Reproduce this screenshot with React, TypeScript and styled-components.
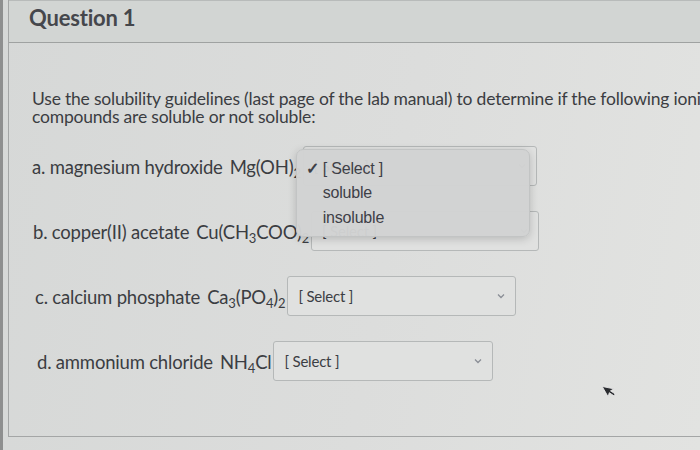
import * as React from 'react'
import styled, { createGlobalStyle } from 'styled-components'

const Global = createGlobalStyle`
  html, body {
    margin: 0;
    padding: 0;
    background: #d8dad9;
  }
  body {
    font-family: Lato, "Open Sans", sans-serif;
    color: #3b3d42;
  }
`

const Screen = styled.div`
  width: 700px;
  height: 450px;
  overflow: hidden;
  border-left: 3px solid #8e8f8f;
  box-sizing: border-box;
  background: linear-gradient(100deg, #d6d8d7 0%, #dcdddc 55%, #e2e3e1 100%);
`

const Panel = styled.div`
  margin-left: 5px;
  height: 437px;
  border-left: 1px solid #a4a6a6;
  border-bottom: 1px solid #a4a6a6;
  box-sizing: border-box;
  display: flex;
  flex-direction: column;
`

const Header = styled.header`
  height: 43px;
  background: #d2d5d3;
  border-bottom: 1px solid #9fa2a1;
  border-top: 1px solid #b8bbba;
  box-sizing: border-box;
  padding: 3px 0 0 20px;
`

const Title = styled.h1`
  margin: 0;
  font-size: 22px;
  font-weight: 700;
  color: #45474c;
  letter-spacing: -0.2px;
`

const Body = styled.div`
  padding: 47px 0 0 23px;
  position: relative;
  flex: 1;
`

const Intro = styled.p`
  margin: 0;
  font-size: 17.5px;
  line-height: 18px;
  white-space: nowrap;
  letter-spacing: -0.2px;
`

const Rows = styled.div`
  display: flex;
  flex-direction: column;
  gap: 25px;
  margin-top: 21px;
`

const Row = styled.div<{ $indent: number }>`
  display: flex;
  align-items: center;
  gap: 2px;
  padding-left: ${p => p.$indent}px;
  font-size: 18.5px;
  height: 40px;
  letter-spacing: -0.2px;
`

const Label = styled.span`
  white-space: nowrap;
  margin-right: 5px;
`

const Formula = styled.span`
  white-space: nowrap;
`

const Sub = styled.sub`
  font-size: 13px;
  vertical-align: -4px;
  line-height: 0;
`

const SelectBox = styled.div<{ $w: number }>`
  position: relative;
  width: ${p => p.$w}px;
  height: 40px;
  box-sizing: border-box;
  border: 1px solid #b5b8b8;
  border-radius: 3px;
  background: #e0e1e0;
  display: flex;
  align-items: center;
  justify-content: space-between;
  padding: 0 9px 0 10px;
  font-size: 15px;
  color: #3c3e44;
  margin-top: -3px;
`

const Chevron = styled.svg`
  width: 10px;
  height: 10px;
  color: #8a8e96;
`

const Menu = styled.ul`
  position: absolute;
  left: -8px;
  top: 2px;
  width: 234px;
  height: 88px;
  margin: 0;
  padding: 7px 0 0 0;
  list-style: none;
  box-sizing: border-box;
  background: rgba(210, 211, 211, 0.97);
  border: 1px solid #c2c4c4;
  border-radius: 7px;
  box-shadow: 0 2px 8px rgba(0, 0, 0, 0.18);
  font-family: "Liberation Sans", Arimo, sans-serif;
  font-size: 16px;
  color: #3e4047;
  z-index: 2;
`

const Item = styled.li`
  display: flex;
  align-items: center;
  height: 24.5px;
  padding-left: 9px;
`

const Check = styled.span<{ $on?: boolean }>`
  width: 17px;
  font-size: 16px;
  font-weight: 700;
  visibility: ${p => (p.$on ? 'visible' : 'hidden')};
`

const Cursor = styled.svg`
  position: absolute;
  left: 594px;
  top: 339px;
  width: 14px;
  height: 16px;
  transform: rotate(-30deg);
`

function Select({ w, open }: { w: number; open?: boolean }) {
  return (
    <SelectBox $w={w}>
      <span>[ Select ]</span>
      <Chevron viewBox="0 0 10 10" fill="none" stroke="currentColor" strokeWidth="1.3">
        <path d="M2 3.5 L5 6.5 L8 3.5" />
      </Chevron>
      {open && (
        <Menu>
          <Item><Check $on>✓</Check>[ Select ]</Item>
          <Item><Check />soluble</Item>
          <Item><Check />insoluble</Item>
        </Menu>
      )}
    </SelectBox>
  )
}

export default function App() {
  return (
    <>
      <Global />
      <Screen>
        <Panel>
          <Header>
            <Title>Question 1</Title>
          </Header>
          <Body>
            <Intro>
              Use the solubility guidelines (last page of the lab manual) to determine if the following ionic
              <br />
              compounds are soluble or not soluble:
            </Intro>
            <Rows>
              <Row $indent={0}>
                <Label>a. magnesium hydroxide</Label>
                <Formula>Mg(OH)<Sub>2</Sub></Formula>
                <Select w={234} open />
              </Row>
              <Row $indent={1}>
                <Label>b. copper(II) acetate</Label>
                <Formula>Cu(CH<Sub>3</Sub>COO)<Sub>2</Sub></Formula>
                <Select w={228} />
              </Row>
              <Row $indent={3}>
                <Label>c. calcium phosphate</Label>
                <Formula>Ca<Sub>3</Sub>(PO<Sub>4</Sub>)<Sub>2</Sub></Formula>
                <Select w={229} />
              </Row>
              <Row $indent={5}>
                <Label>d. ammonium chloride</Label>
                <Formula>NH<Sub>4</Sub>Cl</Formula>
                <Select w={220} />
              </Row>
            </Rows>
            <Cursor viewBox="0 0 14 16">
              <path d="M2 1 L2 13 L5 10 L7.5 15 L9.5 14 L7 9 L11 9 Z" fill="#2a2c30" stroke="#e8e8e8" strokeWidth="0.8" />
            </Cursor>
          </Body>
        </Panel>
      </Screen>
    </>
  )
}
